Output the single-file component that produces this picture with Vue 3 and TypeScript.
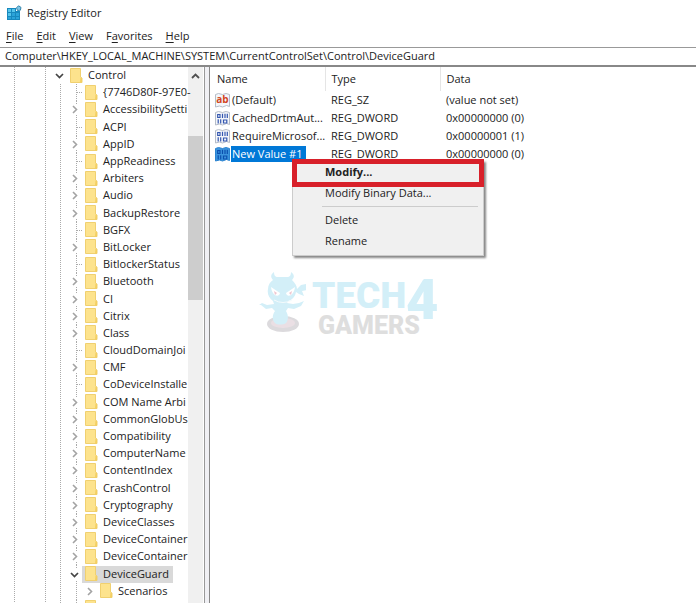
<script setup lang="ts">
interface TreeNode {
  name: string
  level: 0 | 1 | 2
  state: 'leaf' | 'closed' | 'open'
  selected?: boolean
}

interface RegistryValue {
  name: string
  kind: 'text' | 'binary'
  type: string
  data: string
  selected?: boolean
}

const menus = [
  { before: '', key: 'F', after: 'ile' },
  { before: '', key: 'E', after: 'dit' },
  { before: '', key: 'V', after: 'iew' },
  { before: 'F', key: 'a', after: 'vorites' },
  { before: '', key: 'H', after: 'elp' },
]

const path = 'Computer\\HKEY_LOCAL_MACHINE\\SYSTEM\\CurrentControlSet\\Control\\DeviceGuard'

const child = (name: string, state: TreeNode['state'] = 'closed'): TreeNode => ({ name, level: 1, state })

const nodes: TreeNode[] = [
  { name: 'Control', level: 0, state: 'open' },
  child('{7746D80F-97E0-', 'leaf'),
  child('AccessibilitySetti'),
  child('ACPI', 'leaf'),
  child('AppID'),
  child('AppReadiness', 'leaf'),
  child('Arbiters'),
  child('Audio'),
  child('BackupRestore'),
  child('BGFX', 'leaf'),
  child('BitLocker'),
  child('BitlockerStatus', 'leaf'),
  child('Bluetooth'),
  child('CI'),
  child('Citrix'),
  child('Class'),
  child('CloudDomainJoi', 'leaf'),
  child('CMF'),
  child('CoDeviceInstalle', 'leaf'),
  child('COM Name Arbi'),
  child('CommonGlobUs'),
  child('Compatibility'),
  child('ComputerName'),
  child('ContentIndex'),
  child('CrashControl'),
  child('Cryptography'),
  child('DeviceClasses'),
  child('DeviceContainer'),
  child('DeviceContainer'),
  { name: 'DeviceGuard', level: 1, state: 'open', selected: true },
  { name: 'Scenarios', level: 2, state: 'closed' },
  child('', 'leaf'),
]

const values: RegistryValue[] = [
  { name: '(Default)', kind: 'text', type: 'REG_SZ', data: '(value not set)' },
  { name: 'CachedDrtmAut...', kind: 'binary', type: 'REG_DWORD', data: '0x00000000 (0)' },
  { name: 'RequireMicrosof...', kind: 'binary', type: 'REG_DWORD', data: '0x00000001 (1)' },
  { name: 'New Value #1', kind: 'binary', type: 'REG_DWORD', data: '0x00000000 (0)', selected: true },
]
</script>

<template>
  <div class="window">
    <header class="title">
      <svg class="app-icon" width="16" height="16" viewBox="0 0 16 16" aria-hidden="true">
        <path d="M1 3h9v3h4v9H1z" fill="#1788bd" />
        <path d="M2 4h3v3H2zM6 4h3v3H6zM2 8h3v3H2z" fill="#55c4ea" />
        <path d="M6 8h3v3H6zM10 8h3v3h-3zM2 12h3v2H2zM6 12h3v2H6zM10 12h3v2h-3z" fill="#2ba3d8" />
        <path d="M12.500 .8l2.500 1.600-.6 2.800-2.900.3-1-2.700z" fill="#7fc4e4" stroke="#3585ac" />
      </svg>
      <span>Registry Editor</span>
    </header>

    <nav class="menubar">
      <button v-for="m in menus" :key="m.key" type="button">{{ m.before }}<u>{{ m.key }}</u>{{ m.after }}</button>
    </nav>

    <input class="address" type="text" :value="path" aria-label="Registry path" spellcheck="false" />

    <main class="panes">
      <section class="tree-pane">
        <ul class="tree">
          <li v-for="(n, i) in nodes" :key="i" :class="['row', `level-${n.level}`, n.state]">
            <span class="branch">
              <svg v-if="n.state === 'closed'" width="9" height="11" viewBox="0 0 9 11" aria-hidden="true">
                <path d="M3 2l3.500 3.500L3 9" fill="none" stroke="#a3a3a3" stroke-width="1.600" />
              </svg>
              <svg v-else-if="n.state === 'open'" width="11" height="11" viewBox="0 0 11 11" aria-hidden="true">
                <path d="M2 4l3.500 3.500L9 4" fill="none" stroke="#444" stroke-width="1.700" />
              </svg>
            </span>
            <button type="button" :class="['node', { selected: n.selected }]" :aria-label="n.name || 'Key'">
              <svg width="13" height="15" viewBox="0 0 13 15" aria-hidden="true">
                <path d="M.5.500h10v8.500l1.500 1v4.500H.5z" fill="#fde38d" stroke="#f0d070" />
                <path d="M10.500 9.500l1.500 1v4h-2z" fill="#f3cf62" />
              </svg>
              <span>{{ n.name }}</span>
            </button>
          </li>
        </ul>
        <div class="scrollbar">
          <svg width="15" height="18" viewBox="0 0 15 18" aria-hidden="true">
            <path d="M4 11l3.500-3.500L11 11" fill="none" stroke="#505050" stroke-width="1.800" />
          </svg>
          <span class="space"></span>
          <span class="thumb"></span>
          <span class="rest"></span>
        </div>
      </section>

      <div class="splitter"></div>

      <section class="value-pane">
        <table>
          <thead>
            <tr>
              <th class="name">Name</th>
              <th class="type">Type</th>
              <th>Data</th>
            </tr>
          </thead>
          <tbody>
            <tr v-for="v in values" :key="v.name" :class="{ selected: v.selected }">
              <td class="name">
                <div class="value">
                  <svg width="15" height="15" viewBox="0 0 15 15" aria-hidden="true">
                    <path class="sheet" d="M.5 1.500l3-1 4 1 3.500-1 3.500 1v12l-3-1-4 1.500-3-1-4 1z" />
                    <text v-if="v.kind === 'text'" class="ab" x="7.500" y="10">ab</text>
                    <path
                      v-else
                      class="bits"
                      d="M2.700 3.500h2.300v3H2.700zM7.500 2.800v4.200M10 2.800v4.200M12.300 2.800v4.200M3.200 8.300v4.200M5.700 8.300v4.200M8.500 9h3.300v3H8.500z"
                    />
                  </svg>
                  <span>{{ v.name }}</span>
                </div>
              </td>
              <td>{{ v.type }}</td>
              <td>{{ v.data }}</td>
            </tr>
          </tbody>
        </table>

        <div class="watermark">
          <svg width="48" height="62" viewBox="0 0 48 62" aria-hidden="true">
            <ellipse cx="25" cy="52" rx="16" ry="8" fill="#dcdadd" />
            <ellipse cx="25" cy="51" rx="12" ry="5" fill="#eadfe4" />
            <path d="M15 8c-3-3-2-6 1-8 0 3 1 5 4 5h9c3 0 4-2 4-5 3 2 4 5 1 8 3 3 5 6 5 9l4-4 5-1 1 6-5 1 2 5-5-2-3-2c-1 5-4 8-8 9l-1 2 6 1 6-1 5-2-3 5-7 3-6-1-2 3c3 5 2 10 0 12-3 2-9 2-11 0-3-3-3-8 0-12l-3-3-6 1-5-4H1l3-2 5 2 7-1-1-3c-4-3-6-7-5-12 0-4 2-7 5-9z" fill="#d3eff8" />
            <path d="M13 15l9 6c-1 5-8 3-9-6zM37 15l-9 6c1 5 8 3 9-6z" fill="#fff" />
            <path d="M16 19l3 2-2 2zM34 19l-3 2 2 2z" fill="#efc6cf" />
            <path d="M16 28q9 5 18 0" fill="none" stroke="#f4fbfd" />
          </svg>
          <div class="brand">
            <span class="tech">TECH</span>
            <span class="gamers">GAMERS</span>
          </div>
          <span class="four">4</span>
        </div>

        <div class="context">
          <button type="button" class="default">Modify...</button>
          <button type="button">Modify Binary Data...</button>
          <hr />
          <button type="button">Delete</button>
          <button type="button">Rename</button>
          <span class="highlight"></span>
        </div>
      </section>
    </main>
  </div>
</template>

<style>
body {
  margin: 0;
  background: #fff;
}
</style>

<style scoped>
.window {
  display: flex;
  flex-direction: column;
  height: 100vh;
  overflow: hidden;
  background: #fff;
  color: #222;
  font: 11px/16px "Open Sans", "Noto Sans", sans-serif;
}

button {
  margin: 0;
  padding: 0;
  border: 0;
  background: none;
  color: inherit;
  font: inherit;
  text-align: left;
  white-space: nowrap;
}

svg {
  display: block;
  flex: none;
}

.title {
  display: flex;
  align-items: center;
  gap: 5px;
  height: 25px;
  padding-left: 6px;
}

.menubar {
  display: flex;
  align-items: center;
  gap: 13px;
  height: 22px;
  padding-left: 6px;
}

.menubar u {
  text-underline-offset: 2px;
}

.address {
  box-sizing: border-box;
  flex: none;
  width: 100%;
  height: 20px;
  padding: 0 5px 2px;
  border: 0;
  border-top: 1px solid #999;
  border-bottom: 2px solid #888;
  border-radius: 0;
  outline: 0;
  background: #fff;
  color: inherit;
  font: inherit;
}

.panes {
  display: flex;
  flex: 1;
  min-height: 0;
}

.tree-pane {
  display: flex;
  flex: none;
  width: 204px;
  overflow: hidden;
}

.tree {
  --dots: repeating-linear-gradient(#aaa 0 1px, transparent 1px 2px);
  z-index: 1;
  display: grid;
  grid-auto-rows: 1fr;
  flex: 1;
  min-width: 0;
  height: calc(100% + 14px);
  margin: 0;
  padding: 0;
  list-style: none;
  background:
    var(--dots) 14px 0 / 1px 100% no-repeat,
    var(--dots) 45px 0 / 1px 100% no-repeat,
    var(--dots) 60px 17px / 1px 100% no-repeat;
}

.row {
  display: flex;
  align-items: center;
  min-width: 0;
  min-height: 0;
}

.level-0 {
  padding-left: 52px;
}

.level-1 {
  padding-left: 67px;
}

.level-2 {
  padding-left: 82px;
  background: var(--dots) 76px 0 / 1px 100% no-repeat;
}

.branch {
  display: flex;
  align-items: center;
  justify-content: center;
  flex: none;
  width: 15px;
  height: 100%;
}

.level-1 .branch {
  background: var(--dots) 9px 0 / 1px 100% no-repeat;
}

.level-1.leaf .branch {
  background:
    var(--dots) 9px 0 / 1px 100% no-repeat,
    repeating-linear-gradient(90deg, #aaa 0 1px, transparent 1px 2px) 10px 8px / 5px 1px no-repeat;
}

.branch svg {
  background: #fff;
}

.node {
  display: flex;
  align-items: center;
  flex: none;
  gap: 5px;
  padding: 0 4px 1px 3px;
}

.node.selected {
  background: #d9d9d9;
}

.scrollbar {
  display: flex;
  flex-direction: column;
  flex: none;
  width: 15px;
  margin-right: 1px;
  background: #f0f0f0;
}

.space {
  flex: 51;
}

.thumb {
  flex: 164;
  background: #cdcdcd;
}

.rest {
  flex: 303;
}

.splitter {
  flex: none;
  width: 4px;
  border-right: 1px solid #888;
  border-left: 1px solid #999;
  background: #f0f0f4;
}

.value-pane {
  position: relative;
  flex: 1;
  min-width: 0;
}

table {
  width: 100%;
  border-collapse: collapse;
  table-layout: fixed;
}

th,
td {
  box-sizing: border-box;
  height: 18px;
  padding: 0 0 1px 6px;
  font-weight: 400;
  text-align: left;
  white-space: nowrap;
}

th {
  height: 24px;
  border-left: 1px solid #e5e5e5;
}

th.name {
  width: 115px;
  padding-left: 7px;
  border-left: 0;
}

th.type {
  width: 115px;
}

td.name {
  padding: 0 0 0 5px;
}

.value {
  display: flex;
  align-items: center;
  gap: 1px;
}

.value span {
  padding: 0 2px 0 1px;
}

.selected .value span {
  padding-right: 4px;
  background: #0078d7;
  color: #fff;
}

.sheet {
  fill: #f4f6fa;
  stroke: #b5bcc8;
}

.ab {
  fill: #d2451e;
  font: 700 10px "Open Sans", sans-serif;
  text-anchor: middle;
}

.bits {
  fill: none;
  stroke: #3457b0;
  stroke-width: 1.2;
}

.selected .sheet {
  fill: #3c94de;
  stroke: #2b83d0;
}

.selected .bits {
  stroke: #0b4fae;
}

.watermark {
  position: absolute;
  top: 205px;
  left: 48px;
  display: grid;
  grid-template-columns: 48px 100px 1fr;
  font-family: Roboto, "Liberation Sans", sans-serif;
  font-weight: 900;
}

.brand {
  display: flex;
  flex-direction: column;
  padding: 6px 0 0 6px;
}

.tech {
  color: #d3eff8;
  font-size: 37px;
  line-height: 35px;
}

.gamers {
  padding-left: 6px;
  color: #dedede;
  font-size: 25px;
  line-height: 25px;
}

.four {
  color: #d3eff8;
  font-size: 56px;
  line-height: 56px;
}

.context {
  position: absolute;
  top: 93px;
  left: 82px;
  box-sizing: border-box;
  display: flex;
  flex-direction: column;
  width: 192px;
  padding: 1px 2px 3px;
  border: 1px solid #ccc;
  background: #f0f0f0;
  box-shadow: 2px 2px 2px #888;
}

.context button {
  padding: 2px 0 3px 30px;
}

.context hr {
  width: 156px;
  height: 1px;
  margin: 2px 0 3px 27px;
  border: 0;
  background: #ccc;
}

.context .default {
  font-weight: 700;
}

.highlight {
  position: absolute;
  top: -2px;
  right: -1px;
  left: -1px;
  height: 18px;
  border: 5px solid #d8202a;
}
</style>
